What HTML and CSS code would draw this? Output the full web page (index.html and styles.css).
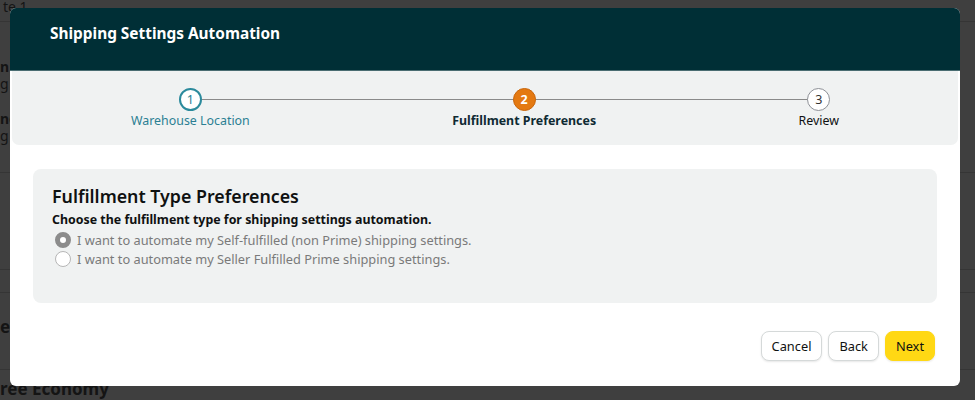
FILE: index.html
```html
<!DOCTYPE html>
<html lang="en">

<head>
    <meta charset="UTF-8">
    <meta name="viewport" content="width=device-width, initial-scale=1.0">
    <title>Shipping Settings Automation</title>
    <link rel="stylesheet" href="styles.css">
</head>

<body>

    <!-- page behind the modal, dimmed -->
    <div class="page">
        <div class="page-row row-top">te 1</div>
        <div class="page-row row-a">
            <div class="strong">n /</div>
            <div class="plain">g</div>
            <div class="strong gap">ne</div>
            <div class="plain">g</div>
        </div>
        <div class="page-row row-c"></div>
        <div class="page-row row-d"></div>
        <div class="page-row row-e"><div class="big">e</div></div>
        <div class="page-row row-f"><div class="big">ree Economy</div></div>
    </div>

    <div class="overlay">
        <div class="modal">
            <div class="modal-header">
                <h1 class="modal-title">Shipping Settings Automation</h1>
            </div>

            <div class="stepper">
                <div class="stepper-line"></div>
                <div class="step done">
                    <span class="step-num">1</span>
                    <span class="step-label">Warehouse Location</span>
                </div>
                <div class="step active">
                    <span class="step-num">2</span>
                    <span class="step-label">Fulfillment Preferences</span>
                </div>
                <div class="step">
                    <span class="step-num">3</span>
                    <span class="step-label">Review</span>
                </div>
            </div>

            <div class="modal-body">
                <div class="card">
                    <h2 class="card-title">Fulfillment Type Preferences</h2>
                    <p class="card-desc">Choose the fulfillment type for shipping settings automation.</p>

                    <label class="radio">
                        <input type="radio" name="fulfillment" value="self" checked disabled>
                        <span class="radio-mark"></span>
                        <span class="radio-text">I want to automate my Self-fulfilled (non Prime) shipping settings.</span>
                    </label>
                    <label class="radio">
                        <input type="radio" name="fulfillment" value="prime" disabled>
                        <span class="radio-mark"></span>
                        <span class="radio-text">I want to automate my Seller Fulfilled Prime shipping settings.</span>
                    </label>
                </div>

                <div class="actions">
                    <button class="btn">Cancel</button>
                    <button class="btn">Back</button>
                    <button class="btn btn-primary">Next</button>
                </div>
            </div>
        </div>
    </div>

</body>

</html>
```

FILE: styles.css
```css
* {
    box-sizing: border-box;
}

body {
    margin: 0;
    font-family: "Noto Sans", "Open Sans", sans-serif;
    background-color: #3f3f3f;
    color: #0f1111;
    height: 400px;
    overflow: hidden;
}

/* background page */
.page {
    color: #141414;
    font-size: 14px;
}

.page-row {
    border-bottom: 1px solid #353535;
}

.row-top {
    height: 22px;
    padding-left: 3px;
    line-height: 12px;
    padding-top: 1px;
}

.row-a {
    height: 151px;
    padding-top: 37px;
    line-height: 16px;
}

.row-a .gap {
    margin-top: 18px;
}

.row-a .plain {
    line-height: 18px;
}

.strong {
    font-weight: 700;
}

.row-c {
    height: 97px;
}

.row-d {
    height: 23px;
}

.row-e {
    height: 77px;
    padding-top: 20px;
}

.row-f {
    padding-top: 5px;
}

.big {
    font-size: 17px;
    font-weight: 700;
    line-height: 28px;
}

/* modal */
.overlay {
    position: absolute;
    top: 8px;
    left: 10px;
}

.modal {
    width: 950px;
    height: 378px;
    background-color: #ffffff;
    border-radius: 6px;
    overflow: hidden;
    display: flex;
    flex-direction: column;
}

.modal-header {
    background-color: #002f36;
    height: 63px;
    padding: 14px 40px 0;
    border-bottom: 1px solid #4a6d72;
}

.modal-title {
    margin: 0;
    color: #ffffff;
    font-size: 15.4px;
    font-weight: 700;
    line-height: 24px;
}

.stepper {
    position: relative;
    margin: 0 2px;
    height: 74px;
    background-color: #f0f2f2;
    border-radius: 0 0 7px 7px;
    display: flex;
    justify-content: space-between;
    padding: 17px 119px 0;
}

.stepper-line {
    position: absolute;
    top: 28px;
    left: 179px;
    right: 140px;
    border-top: 1px solid #8a8a8a;
}

.step {
    position: relative;
    display: flex;
    flex-direction: column;
    align-items: center;
    color: #0f1111;
}

.step-num {
    width: 23px;
    height: 23px;
    border-radius: 50%;
    border: 1px solid #8d9096;
    background-color: #ffffff;
    display: flex;
    align-items: center;
    justify-content: center;
    font-size: 12.5px;
    color: #333;
}

.step-label {
    font-size: 12.4px;
    line-height: 19px;
}

.step.done .step-num {
    border: 2px solid #2b8a9c;
    color: #2b7f93;
}

.step.done .step-label {
    color: #2b7f93;
}

.step.active .step-num {
    border: 1px solid #c9660b;
    background-color: #e47911;
    color: #ffffff;
    font-weight: 700;
}

.step.active .step-label {
    font-weight: 700;
    color: #0f2a33;
}

.modal-body {
    padding: 24px 23px 0;
}

.card {
    background-color: #f0f2f2;
    border-radius: 8px;
    height: 134px;
    padding: 14px 19px;
}

.card-title {
    margin: 0;
    font-size: 17.8px;
    font-weight: 600;
    line-height: 26px;
    color: #0f1111;
}

.card-desc {
    margin: 2px 0 1px;
    font-size: 12.4px;
    font-weight: 700;
    line-height: 18px;
    color: #0f1111;
}

.radio {
    display: flex;
    align-items: center;
    gap: 6px;
    padding-left: 3px;
    height: 19px;
}

.radio input {
    display: none;
}

.radio-mark {
    width: 16px;
    height: 16px;
    border-radius: 50%;
    border: 1px solid #b5b5b5;
    background-color: #ffffff;
}

.radio input:checked + .radio-mark {
    background-color: #ffffff;
    border: 5px solid #8c8c8c;
}

.radio-text {
    font-size: 12.8px;
    color: #7a7a7a;
}

.actions {
    display: flex;
    justify-content: flex-end;
    gap: 6px;
    margin-top: 28px;
    padding-right: 2px;
}

.btn {
    font-family: inherit;
    font-size: 12.8px;
    height: 30px;
    padding: 0 10px;
    background-color: #ffffff;
    color: #0f1111;
    border: 1px solid #d5d9d9;
    border-radius: 8px;
    box-shadow: 0 1px 2px rgba(15, 17, 17, 0.1);
}

.btn-primary {
    background-color: #ffd814;
    border-color: #ffd814;
    padding: 0 10px;
}
```
